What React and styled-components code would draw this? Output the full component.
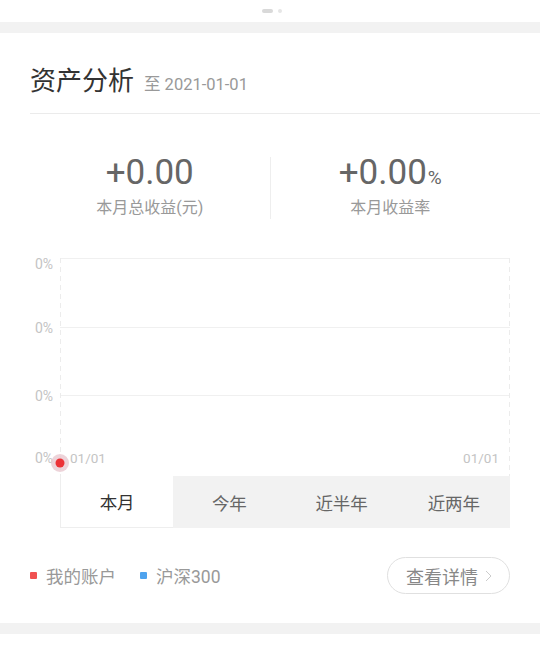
import React from "react";
import styled, { createGlobalStyle } from "styled-components";

const GlobalStyle = createGlobalStyle`
  body {
    margin: 0;
    background: #fff;
    font-family: Roboto, "Noto Sans CJK SC", sans-serif;
  }
`;

const Page = styled.div`
  width: 540px;
  background: #fff;
`;

const Indicator = styled.div`
  height: 22px;
  display: flex;
  justify-content: center;
  align-items: center;
  gap: 5px;
  padding-left: 4px;
  box-sizing: border-box;
`;

const Dot = styled.span`
  display: block;
  width: ${(p) => (p.active ? "11px" : "4px")};
  height: 4px;
  border-radius: 2px;
  background: ${(p) => (p.active ? "#d9d9d9" : "#e6e6e6")};
`;

const Band = styled.div`
  height: 11px;
  background: #f2f2f2;
`;

const Card = styled.section`
  padding-left: 30px;
`;

const Header = styled.div`
  height: 80px;
  box-sizing: content-box;
  border-bottom: 1px solid #ebebeb;
  display: flex;
  align-items: baseline;
  gap: 10px;
`;

const Title = styled.h2`
  margin: 35px 0 0;
  font-size: 26px;
  line-height: 26px;
  font-weight: 400;
  color: #333;
`;

const DateText = styled.span`
  font-size: 16.5px;
  color: #999;
`;

const Body = styled.div`
  padding-right: 30px;
`;

const Stats = styled.div`
  display: flex;
  align-items: flex-start;
  padding-top: 39px;
`;

const Stat = styled.div`
  flex: 1;
  display: flex;
  flex-direction: column;
  align-items: center;
`;

const Value = styled.div`
  height: 40px;
  font-size: 35px;
  line-height: 40px;
  color: #666;
  white-space: nowrap;
`;

const Unit = styled.span`
  font-size: 19px;
  line-height: 0;
  margin-left: 1px;
`;

const StatLabel = styled.div`
  margin-top: 4px;
  font-size: 16px;
  line-height: 22px;
  color: #999;
`;

const Separator = styled.div`
  width: 1px;
  height: 62px;
  margin-top: 4px;
  background: #eeeeee;
`;

const ChartWrap = styled.div`
  margin-top: 21px;
  height: 236px;
`;

const Tabs = styled.div`
  margin-left: 30px;
  height: 52px;
  display: flex;
  background: #f2f2f2;
`;

const Tab = styled.div`
  flex: 1;
  display: flex;
  align-items: center;
  justify-content: center;
  font-size: 17.5px;
  color: ${(p) => (p.active ? "#333" : "#666")};
  background: ${(p) => (p.active ? "#fff" : "transparent")};
  border-left: ${(p) => (p.active ? "1px solid #eeeeee" : "none")};
  border-bottom: ${(p) => (p.active ? "1px solid #eeeeee" : "none")};
`;

const Footer = styled.div`
  display: flex;
  align-items: center;
  justify-content: space-between;
  padding: 29px 0;
`;

const Legend = styled.div`
  display: flex;
  align-items: center;
  gap: 24px;
`;

const LegendItem = styled.div`
  display: flex;
  align-items: center;
  gap: 9px;
  font-size: 17.5px;
  color: #999;
`;

const Swatch = styled.span`
  display: block;
  width: 7px;
  height: 7px;
  border-radius: 1px;
  background: ${(p) => p.color};
`;

const DetailButton = styled.button`
  width: 123px;
  height: 37px;
  box-sizing: border-box;
  border: 1px solid #e0e0e0;
  border-radius: 19px;
  background: #fff;
  padding: 0 0 0 18px;
  display: flex;
  align-items: center;
  gap: 7px;
  font-family: inherit;
  font-size: 18px;
  color: #888;
`;

const Chart = () => {
  const lines = [18, 87, 155];
  const yLabels = [24, 88, 156, 218];
  return (
    <svg width="480" height="236" viewBox="0 0 480 236">
      {lines.map((y) => (
        <line key={y} x1="30" x2="480" y1={y + 0.5} y2={y + 0.5} stroke="#f0f0f0" />
      ))}
      <line x1="30.5" x2="30.5" y1="18" y2="236" stroke="#ececec" strokeDasharray="5 4" />
      <line x1="479.5" x2="479.5" y1="18" y2="236" stroke="#ececec" strokeDasharray="5 4" />
      {yLabels.map((y) => (
        <text
          key={y}
          x="23"
          y={y + 5}
          textAnchor="end"
          fontSize="14"
          fill="#c4c4c4"
          fontFamily="Roboto, sans-serif"
        >
          0%
        </text>
      ))}
      <text x="40" y="223" fontSize="13.5" fill="#c4c4c4" fontFamily="Roboto, sans-serif">
        01/01
      </text>
      <text x="469" y="223" textAnchor="end" fontSize="13.5" fill="#c4c4c4" fontFamily="Roboto, sans-serif">
        01/01
      </text>
      <circle cx="30" cy="223" r="9" fill="#e8c8d0" opacity="0.8" />
      <circle cx="30" cy="223" r="4.5" fill="#ec3237" />
    </svg>
  );
};

const Chevron = () => (
  <svg width="7" height="12" viewBox="0 0 7 12">
    <path d="M1 1l5 5-5 5" fill="none" stroke="#cccccc" strokeWidth="1" />
  </svg>
);

const tabs = ["本月", "今年", "近半年", "近两年"];

const App = () => (
  <Page>
    <GlobalStyle />
    <Indicator>
      <Dot active />
      <Dot />
    </Indicator>
    <Band />
    <Card>
      <Header>
        <Title>资产分析</Title>
        <DateText>至 2021-01-01</DateText>
      </Header>
      <Body>
        <Stats>
          <Stat>
            <Value>+0.00</Value>
            <StatLabel>本月总收益(元)</StatLabel>
          </Stat>
          <Separator />
          <Stat>
            <Value>
              +0.00<Unit>%</Unit>
            </Value>
            <StatLabel>本月收益率</StatLabel>
          </Stat>
        </Stats>
        <ChartWrap>
          <Chart />
        </ChartWrap>
        <Tabs>
          {tabs.map((t, i) => (
            <Tab key={t} active={i === 0}>
              {t}
            </Tab>
          ))}
        </Tabs>
        <Footer>
          <Legend>
            <LegendItem>
              <Swatch color="#f05151" />
              我的账户
            </LegendItem>
            <LegendItem>
              <Swatch color="#4fa3ee" />
              沪深300
            </LegendItem>
          </Legend>
          <DetailButton>
            查看详情
            <Chevron />
          </DetailButton>
        </Footer>
      </Body>
    </Card>
    <Band />
    <div style={{ height: 30 }} />
  </Page>
);

export default App;
